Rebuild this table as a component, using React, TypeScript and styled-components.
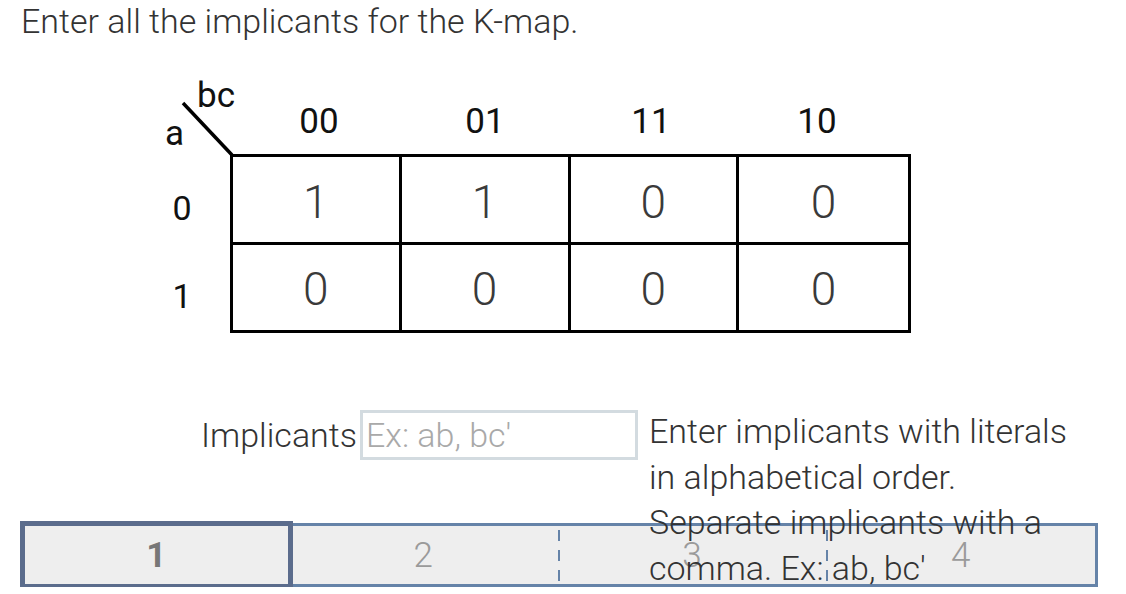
import React from "react";
import styled, { createGlobalStyle } from "styled-components";

const GlobalStyle = createGlobalStyle`
  html, body {
    margin: 0;
    padding: 0;
    background: #ffffff;
  }
  body {
    font-family: Roboto, "Liberation Sans", Arial, sans-serif;
    color: #333333;
  }
  * { box-sizing: border-box; }
`;

const Page = styled.div`
  width: 1126px;
  padding: 1px 28px 0 20px;
`;

const Title = styled.div`
  font-size: 34px;
  line-height: 40px;
  font-weight: 300;
  color: #333;
  padding-left: 1px;
`;

const KMap = styled.div`
  margin: 39px 0 0 120px;
  display: flex;
  flex-direction: column;
`;

const HeaderRow = styled.div`
  display: flex;
  align-items: flex-end;
  height: 74px;
`;

const Corner = styled.div`
  position: relative;
  width: 96px;
  height: 74px;
  flex: none;
`;

const CornerLine = styled.svg`
  position: absolute;
  left: 0;
  top: 0;
  overflow: visible;
`;

const VarLabel = styled.span<{ $left: number; $top: number }>`
  position: absolute;
  left: ${(p) => p.$left}px;
  top: ${(p) => p.$top}px;
  font-size: 35px;
  line-height: 35px;
  color: #111;
`;

const ColLabel = styled.div`
  width: 166px;
  flex: none;
  text-align: center;
  font-size: 35px;
  line-height: 35px;
  margin-bottom: 15px;
  color: #111;
`;

const Body = styled.div`
  display: flex;
`;

const RowLabels = styled.div`
  width: 90px;
  flex: none;
  display: flex;
  flex-direction: column;
  gap: 54px;
  padding-top: 37px;
`;

const RowLabel = styled.div`
  text-align: center;
  padding-right: 6px;
  font-size: 34px;
  line-height: 34px;
  color: #111;
`;

const Grid = styled.div`
  width: 681px;
  display: grid;
  grid-template-columns: repeat(4, 1fr);
  grid-template-rows: 88px 85px;
  border: 3px solid #000;
`;

const Cell = styled.div<{ $lastCol: boolean; $lastRow: boolean }>`
  display: flex;
  align-items: center;
  justify-content: center;
  padding-top: ${(p) => (p.$lastRow ? 2 : 5)}px;
  font-size: 46px;
  font-weight: 300;
  color: #3a3a3a;
  border-right: ${(p) => (p.$lastCol ? "none" : "3px solid #000")};
  border-bottom: ${(p) => (p.$lastRow ? "none" : "3px solid #000")};
`;

const AnswerRow = styled.div`
  display: flex;
  align-items: flex-start;
  height: 119px;
  margin: 69px 0 0 181px;
`;

const Field = styled.div`
  display: flex;
  align-items: center;
  margin-top: 8px;
`;

const FieldLabel = styled.label`
  font-size: 34px;
  font-weight: 300;
  color: #333;
`;

const Input = styled.input`
  width: 278px;
  height: 50px;
  margin-left: 3px;
  border: 3px solid #d3dbe0;
  padding: 0 3px;
  font-family: Roboto, "Liberation Sans", Arial, sans-serif;
  font-size: 34px;
  font-weight: 300;
  color: #333;
  outline: none;
  &::placeholder {
    color: #a9a9a9;
  }
`;

const Hint = styled.div`
  position: relative;
  z-index: 2;
  width: 430px;
  margin: 7px 0 0 11px;
  font-size: 34px;
  line-height: 45.5px;
  font-weight: 300;
  color: #333;
`;

const TabBar = styled.div`
  margin-top: 2px;
  width: 1078px;
  height: 64px;
  display: grid;
  grid-template-columns: repeat(4, 1fr);
  background: #eeeeee;
  border: 3px solid #6583a8;
  border-left: none;
`;

const Tab = styled.div<{ $active?: boolean; $dashed?: boolean }>`
  display: flex;
  align-items: center;
  justify-content: center;
  font-size: 35px;
  font-weight: ${(p) => (p.$active ? 700 : 300)};
  color: ${(p) => (p.$active ? "#777" : "#9a9a9a")};
  ${(p) =>
    p.$dashed
      ? `
    background-image: repeating-linear-gradient(to bottom, #6583a8 0 11px, transparent 11px 20px);
    background-size: 3px 100%;
    background-repeat: no-repeat;
    background-position: -1px 4px;
  `
      : ""}
  ${(p) =>
    p.$active
      ? `
    position: relative;
    z-index: 1;
    margin: -5px -4px -5px 0;
    border: 5px solid #5b6c8c;
    background: #eeeeee;
  `
      : ""}
`;

const cols = ["00", "01", "11", "10"];
const values = [
  ["1", "1", "0", "0"],
  ["0", "0", "0", "0"],
];

export default function App() {
  return (
    <>
      <GlobalStyle />
      <Page>
        <Title>Enter all the implicants for the K-map.</Title>
        <KMap>
          <HeaderRow>
            <Corner>
              <CornerLine width="90" height="74">
                <line x1="43" y1="23" x2="92" y2="75" stroke="#000" strokeWidth="3.5" />
              </CornerLine>
              <VarLabel $left={25} $top={36}>a</VarLabel>
              <VarLabel $left={57} $top={-2}>bc</VarLabel>
            </Corner>
            {cols.map((c) => (
              <ColLabel key={c}>{c}</ColLabel>
            ))}
          </HeaderRow>
          <Body>
            <RowLabels>
              <RowLabel>0</RowLabel>
              <RowLabel>1</RowLabel>
            </RowLabels>
            <Grid>
              {values.map((row, r) =>
                row.map((v, c) => (
                  <Cell key={`${r}-${c}`} $lastCol={c === 3} $lastRow={r === 1}>
                    {v}
                  </Cell>
                ))
              )}
            </Grid>
          </Body>
        </KMap>
        <AnswerRow>
          <Field>
            <FieldLabel htmlFor="implicants">Implicants</FieldLabel>
            <Input id="implicants" placeholder="Ex: ab, bc'" />
          </Field>
          <Hint>
            Enter implicants with literals in alphabetical order. Separate implicants with a comma. Ex: ab, bc'
          </Hint>
        </AnswerRow>
        <TabBar>
          <Tab $active>1</Tab>
          <Tab>2</Tab>
          <Tab $dashed>3</Tab>
          <Tab $dashed>4</Tab>
        </TabBar>
      </Page>
    </>
  );
}
